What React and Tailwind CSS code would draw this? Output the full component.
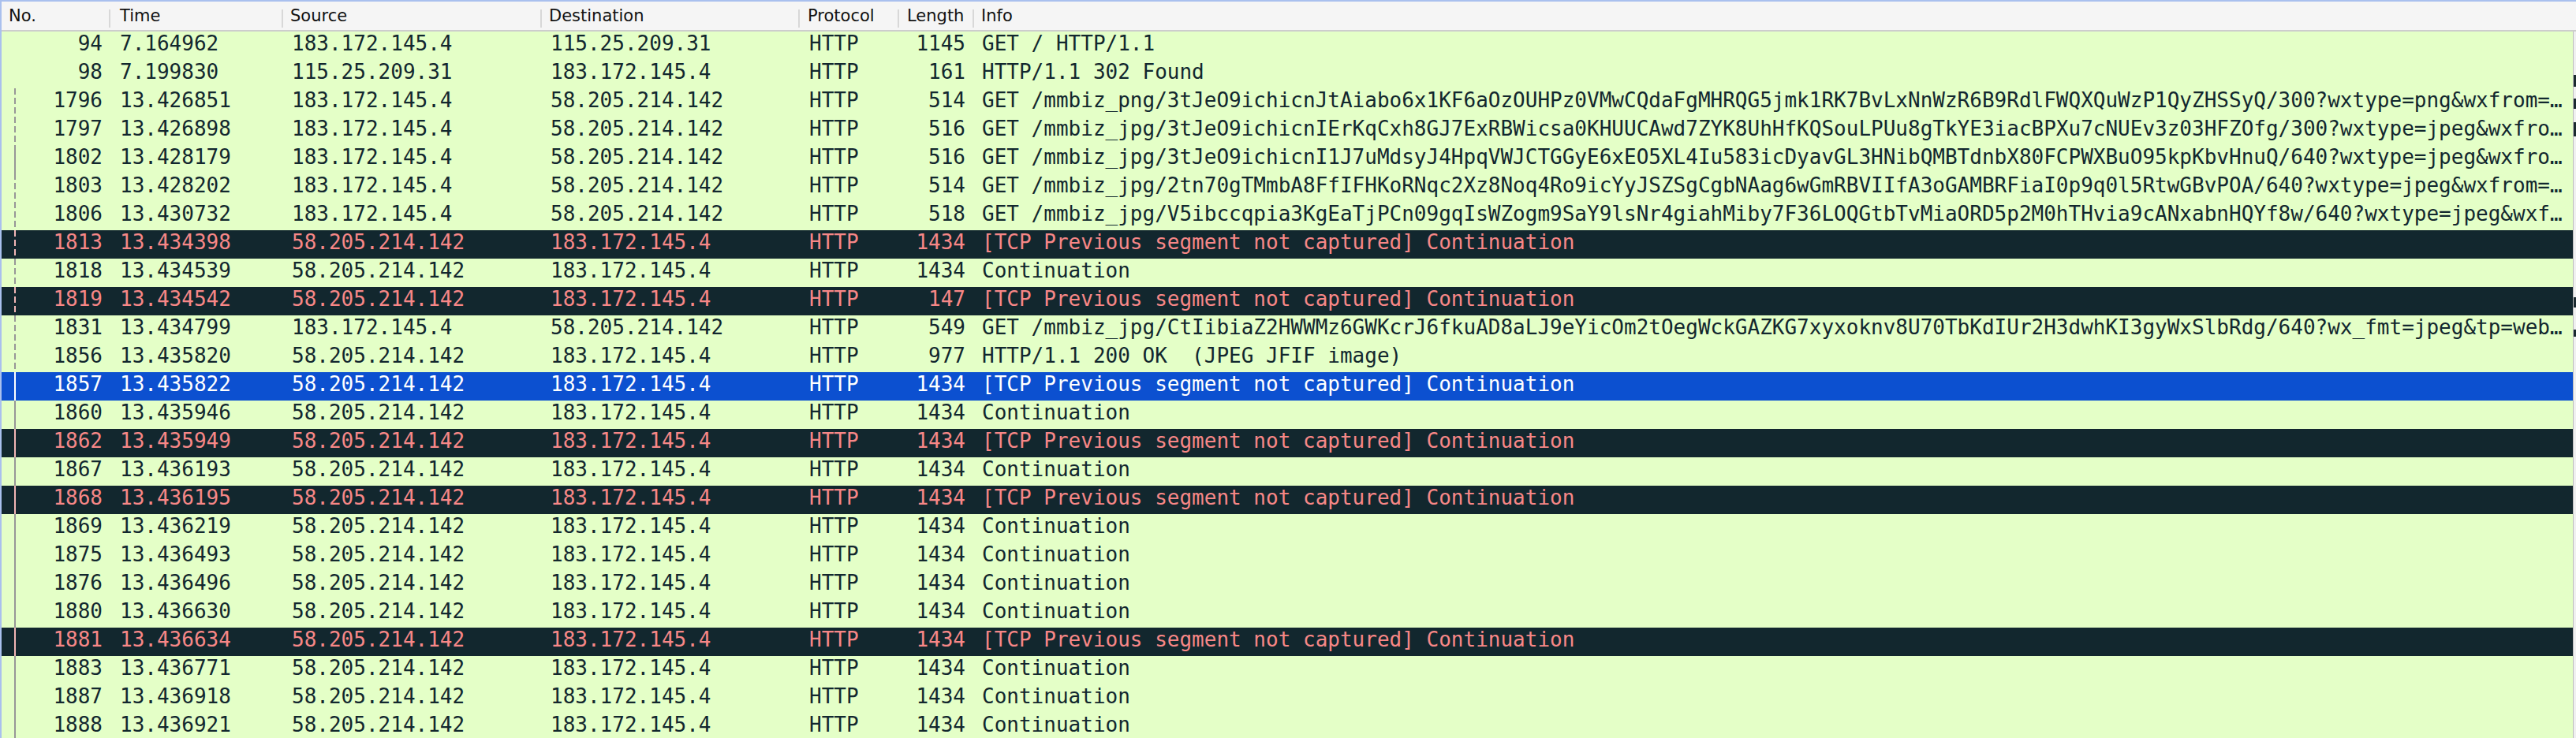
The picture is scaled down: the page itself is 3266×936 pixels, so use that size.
const ROWS = [
  { no: 94, time: '7.164962', src: '183.172.145.4', dst: '115.25.209.31', len: 1145, info: 'GET / HTTP/1.1', kind: 'http', line: 'none' },
  { no: 98, time: '7.199830', src: '115.25.209.31', dst: '183.172.145.4', len: 161, info: 'HTTP/1.1 302 Found', kind: 'http', line: 'none' },
  { no: 1796, time: '13.426851', src: '183.172.145.4', dst: '58.205.214.142', len: 514, info: 'GET /mmbiz_png/3tJeO9ichicnJtAiabo6x1KF6aOzOUHPz0VMwCQdaFgMHRQG5jmk1RK7BvLxNnWzR6B9RdlFWQXQuWzP1QyZHSSyQ/300?wxtype=png&wxfrom=5&wx_lazy=1 HTTP/1.1', kind: 'http', line: 'dash' },
  { no: 1797, time: '13.426898', src: '183.172.145.4', dst: '58.205.214.142', len: 516, info: 'GET /mmbiz_jpg/3tJeO9ichicnIErKqCxh8GJ7ExRBWicsa0KHUUCAwd7ZYK8UhHfKQSouLPUu8gTkYE3iacBPXu7cNUEv3z03HFZOfg/300?wxtype=jpeg&wxfrom=5&wx_lazy=1 HTTP/1.1', kind: 'http', line: 'dash' },
  { no: 1802, time: '13.428179', src: '183.172.145.4', dst: '58.205.214.142', len: 516, info: 'GET /mmbiz_jpg/3tJeO9ichicnI1J7uMdsyJ4HpqVWJCTGGyE6xEO5XL4Iu583icDyavGL3HNibQMBTdnbX80FCPWXBuO95kpKbvHnuQ/640?wxtype=jpeg&wxfrom=5&wx_lazy=1 HTTP/1.1', kind: 'http', line: 'solid' },
  { no: 1803, time: '13.428202', src: '183.172.145.4', dst: '58.205.214.142', len: 514, info: 'GET /mmbiz_jpg/2tn70gTMmbA8FfIFHKoRNqc2Xz8Noq4Ro9icYyJSZSgCgbNAag6wGmRBVIIfA3oGAMBRFiaI0p9q0l5RtwGBvPOA/640?wxtype=jpeg&wxfrom=5&wx_lazy=1 HTTP/1.1', kind: 'http', line: 'dash' },
  { no: 1806, time: '13.430732', src: '183.172.145.4', dst: '58.205.214.142', len: 518, info: 'GET /mmbiz_jpg/V5ibccqpia3KgEaTjPCn09gqIsWZogm9SaY9lsNr4giahMiby7F36LOQGtbTvMiaORD5p2M0hTHvia9cANxabnHQYf8w/640?wxtype=jpeg&wxfrom=5&wx_lazy=1 HTTP/1.1', kind: 'http', line: 'dash' },
  { no: 1813, time: '13.434398', src: '58.205.214.142', dst: '183.172.145.4', len: 1434, info: '[TCP Previous segment not captured] Continuation', kind: 'bad', line: 'dash' },
  { no: 1818, time: '13.434539', src: '58.205.214.142', dst: '183.172.145.4', len: 1434, info: 'Continuation', kind: 'http', line: 'dash' },
  { no: 1819, time: '13.434542', src: '58.205.214.142', dst: '183.172.145.4', len: 147, info: '[TCP Previous segment not captured] Continuation', kind: 'bad', line: 'dash' },
  { no: 1831, time: '13.434799', src: '183.172.145.4', dst: '58.205.214.142', len: 549, info: 'GET /mmbiz_jpg/CtIibiaZ2HWWMz6GWKcrJ6fkuAD8aLJ9eYicOm2tOegWckGAZKG7xyxoknv8U70TbKdIUr2H3dwhKI3gyWxSlbRdg/640?wx_fmt=jpeg&tp=webp&wxfrom=5 HTTP/1.1', kind: 'http', line: 'dash' },
  { no: 1856, time: '13.435820', src: '58.205.214.142', dst: '183.172.145.4', len: 977, info: 'HTTP/1.1 200 OK  (JPEG JFIF image)', kind: 'http', line: 'dash' },
  { no: 1857, time: '13.435822', src: '58.205.214.142', dst: '183.172.145.4', len: 1434, info: '[TCP Previous segment not captured] Continuation', kind: 'sel', line: 'solid' },
  { no: 1860, time: '13.435946', src: '58.205.214.142', dst: '183.172.145.4', len: 1434, info: 'Continuation', kind: 'http', line: 'solid' },
  { no: 1862, time: '13.435949', src: '58.205.214.142', dst: '183.172.145.4', len: 1434, info: '[TCP Previous segment not captured] Continuation', kind: 'bad', line: 'solid' },
  { no: 1867, time: '13.436193', src: '58.205.214.142', dst: '183.172.145.4', len: 1434, info: 'Continuation', kind: 'http', line: 'solid' },
  { no: 1868, time: '13.436195', src: '58.205.214.142', dst: '183.172.145.4', len: 1434, info: '[TCP Previous segment not captured] Continuation', kind: 'bad', line: 'solid' },
  { no: 1869, time: '13.436219', src: '58.205.214.142', dst: '183.172.145.4', len: 1434, info: 'Continuation', kind: 'http', line: 'solid' },
  { no: 1875, time: '13.436493', src: '58.205.214.142', dst: '183.172.145.4', len: 1434, info: 'Continuation', kind: 'http', line: 'solid' },
  { no: 1876, time: '13.436496', src: '58.205.214.142', dst: '183.172.145.4', len: 1434, info: 'Continuation', kind: 'http', line: 'solid' },
  { no: 1880, time: '13.436630', src: '58.205.214.142', dst: '183.172.145.4', len: 1434, info: 'Continuation', kind: 'http', line: 'solid' },
  { no: 1881, time: '13.436634', src: '58.205.214.142', dst: '183.172.145.4', len: 1434, info: '[TCP Previous segment not captured] Continuation', kind: 'bad', line: 'solid' },
  { no: 1883, time: '13.436771', src: '58.205.214.142', dst: '183.172.145.4', len: 1434, info: 'Continuation', kind: 'http', line: 'solid' },
  { no: 1887, time: '13.436918', src: '58.205.214.142', dst: '183.172.145.4', len: 1434, info: 'Continuation', kind: 'http', line: 'solid' },
  { no: 1888, time: '13.436921', src: '58.205.214.142', dst: '183.172.145.4', len: 1434, info: 'Continuation', kind: 'http', line: 'solid' },
]

const ROW_STYLE = {
  http: 'bg-[#e4ffc7] text-[#12272e]',
  bad: 'bg-[#12272e] text-[#f78787]',
  sel: 'bg-[#0c50d0] text-white',
}

// related-packet indicator colours, per row kind
const LINE_STYLE = {
  http: {
    dash: 'bg-[repeating-linear-gradient(to_bottom,#979797_0_8px,transparent_8px_12px)]',
    solid: 'bg-[#979797]',
  },
  bad: {
    dash: 'bg-[repeating-linear-gradient(to_bottom,#f2b6b6_0_8px,transparent_8px_12px)]',
    solid: 'bg-[#f2b6b6]',
  },
  sel: {
    dash: 'bg-white',
    solid: 'bg-white',
  },
}

// marks in the packet-map strip at the right edge (heights in px)
const STRIP = [
  [55, false], [15, true], [15, false], [13, true], [17, false], [18, true],
  [204, false], [13, true], [28, false], [9, true], [509, false],
]

function HeaderCell({ width, pad, label, sep = true }) {
  return (
    <div className={`flex shrink-0 ${width}`}>
      <div className={`flex-1 ${pad}`}>{label}</div>
      {sep && <div className="mt-[8px] h-[23px] w-[2px] bg-[#d8d8d8]" />}
    </div>
  )
}

function Row({ r }) {
  const line = r.line === 'none' ? '' : LINE_STYLE[r.kind][r.line]
  return (
    <div className={`flex h-[36px] leading-[31px] ${ROW_STYLE[r.kind]}`}>
      <div className="flex w-[138px] shrink-0 pl-[16px]">
        <div className={`w-[2px] ${line}`} />
        <div className="flex-1 pr-[10px] text-right">{r.no}</div>
      </div>
      <div className="w-[219px] shrink-0 pl-[12px]">{r.time}</div>
      <div className="w-[328px] shrink-0 pl-[11px]">{r.src}</div>
      <div className="w-[327px] shrink-0 pl-[11px]">{r.dst}</div>
      <div className="w-[126px] shrink-0 pl-[12px]">HTTP</div>
      <div className="w-[95px] shrink-0 pr-[11px] text-right">{r.len}</div>
      <div className="w-[2027px] shrink-0 overflow-hidden text-ellipsis whitespace-pre pl-[10px] pr-[7px]">{r.info}</div>
    </div>
  )
}

export default function App() {
  return (
    <div className="flex h-[936px] w-[3266px] flex-col overflow-hidden border-l-2 border-t-2 border-[#a9c0ee] bg-[#e4ffc7]">
      <div className="flex h-[38px] shrink-0 border-b-2 border-[#cdcdcd] bg-[#f5f5f5] pt-[2px] font-['DejaVu_Sans',sans-serif] text-[21px] leading-[33px] text-[#111]">
        <HeaderCell width="w-[138px]" pad="pl-[9px]" label="No." />
        <HeaderCell width="w-[219px]" pad="pl-[12px]" label="Time" />
        <HeaderCell width="w-[328px]" pad="pl-[9px]" label="Source" />
        <HeaderCell width="w-[327px]" pad="pl-[9px]" label="Destination" />
        <HeaderCell width="w-[126px]" pad="pl-[10px]" label="Protocol" />
        <HeaderCell width="w-[95px]" pad="pl-[10px]" label="Length" />
        <HeaderCell width="w-[2027px]" pad="pl-[9px]" label="Info" sep={false} />
      </div>
      <div className="flex min-h-0 flex-1">
        <div className="w-[3260px] shrink-0 font-['DejaVu_Sans_Mono',monospace] text-[26px]">
          {ROWS.map(r => <Row key={r.no} r={r} />)}
        </div>
        <div className="w-[1px] shrink-0 bg-[#bdbdbd]" />
        <div className="flex w-[3px] shrink-0 flex-col bg-[#f0f0f0]">
          {STRIP.map(([h, dark], i) => (
            <div key={i} className={dark ? 'bg-[#1b2a30]' : ''} style={{ height: h }} />
          ))}
        </div>
      </div>
    </div>
  )
}
